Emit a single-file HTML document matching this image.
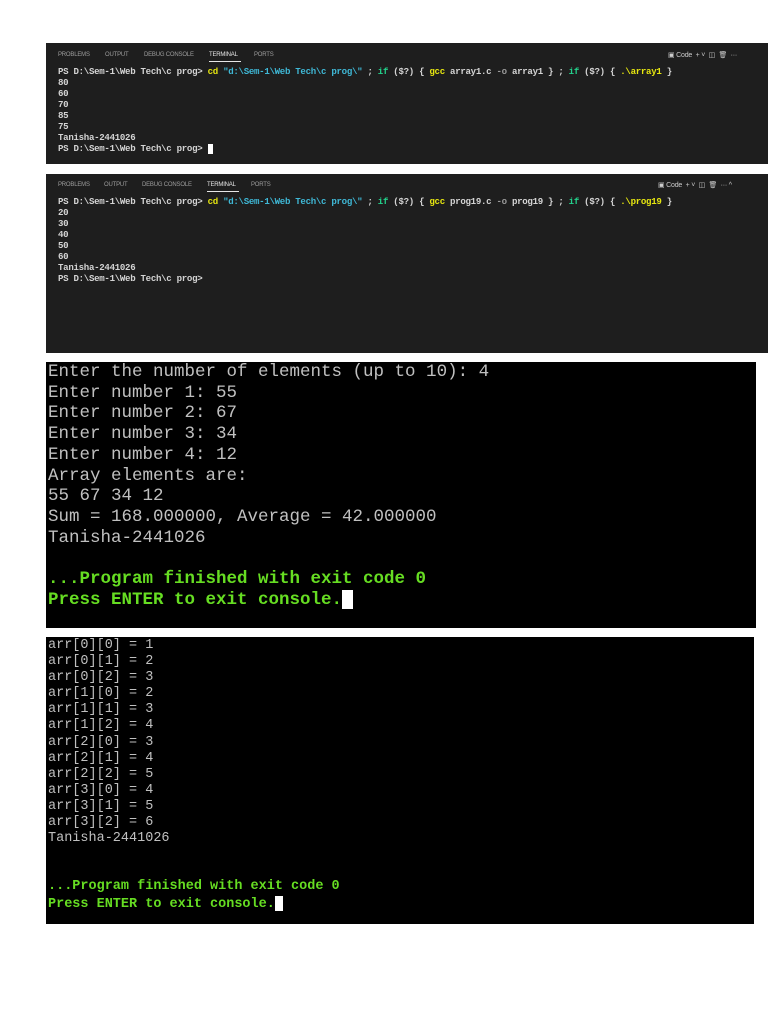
<!DOCTYPE html>
<html><head><meta charset="utf-8"><style>
body{margin:0;width:768px;height:1024px;background:#fff;position:relative;overflow:hidden}
.p{position:absolute;background:#1e1e1e}
.b{position:absolute;background:#000}
.t{position:absolute;font-family:"Liberation Sans",sans-serif;font-size:6px;color:#9d9d9d;letter-spacing:-0.2px}
.m{position:absolute;font-family:"Liberation Mono",monospace;font-size:9.1px;line-height:11px;color:#d4d4d4;white-space:pre;font-weight:bold;letter-spacing:-0.3px}
.y{color:#e5e510}.c{color:#3fb8d6}.g{color:#23d18b}
.k{position:absolute;font-family:"Liberation Mono",monospace;white-space:pre;color:#c0c0c0}
.gr{color:#66dd22;font-weight:bold}
.cur{display:inline-block;background:#fff;vertical-align:middle}
</style></head><body>
<div class="p" style="left:46px;top:43px;width:722px;height:121px"></div>
<div class="t" style="left:58px;top:52px">PROBLEMS</div>
<div class="t" style="left:105px;top:52px">OUTPUT</div>
<div class="t" style="left:144px;top:52px">DEBUG CONSOLE</div>
<div class="t" style="left:209px;top:52px;color:#e7e7e7">TERMINAL</div>
<div style="position:absolute;left:209px;top:61px;width:32px;height:1px;background:#e7e7e7"></div>
<div class="t" style="left:254px;top:52px">PORTS</div>
<div class="t" style="left:668px;top:51px;color:#ccc;font-size:7px">▣ Code &nbsp;+ ˅ &nbsp;◫ &nbsp;🗑 &nbsp;···</div>
<div class="m" style="left:58px;top:66px">PS D:\Sem-1\Web Tech\c prog> <span class="y">cd</span> <span class="c">"d:\Sem-1\Web Tech\c prog\"</span> ; <span class="g">if</span> ($?) { <span class="y">gcc</span> array1.c <span style="color:#999">-o</span> array1 } ; <span class="g">if</span> ($?) { <span class="y">.\array1</span> }
80
60
70
85
75
Tanisha-2441026
PS D:\Sem-1\Web Tech\c prog> <span class="cur" style="width:5px;height:10px"></span></div>

<div class="p" style="left:46px;top:174px;width:722px;height:179px"></div>
<div class="t" style="left:58px;top:182px">PROBLEMS</div>
<div class="t" style="left:104px;top:182px">OUTPUT</div>
<div class="t" style="left:142px;top:182px">DEBUG CONSOLE</div>
<div class="t" style="left:207px;top:182px;color:#e7e7e7">TERMINAL</div>
<div style="position:absolute;left:207px;top:191px;width:32px;height:1px;background:#e7e7e7"></div>
<div class="t" style="left:251px;top:182px">PORTS</div>
<div class="t" style="left:658px;top:181px;color:#ccc;font-size:7px">▣ Code &nbsp;+ ˅ &nbsp;◫ &nbsp;🗑 &nbsp;··· ^</div>
<div class="m" style="left:58px;top:196px">PS D:\Sem-1\Web Tech\c prog> <span class="y">cd</span> <span class="c">"d:\Sem-1\Web Tech\c prog\"</span> ; <span class="g">if</span> ($?) { <span class="y">gcc</span> prog19.c <span style="color:#999">-o</span> prog19 } ; <span class="g">if</span> ($?) { <span class="y">.\prog19</span> }
20
30
40
50
60
Tanisha-2441026
PS D:\Sem-1\Web Tech\c prog></div>

<div class="b" style="left:46px;top:362px;width:710px;height:266px"></div>
<div class="k" style="left:48px;top:362px;font-size:17.5px;line-height:20.7px">Enter the number of elements (up to 10): 4
Enter number 1: 55
Enter number 2: 67
Enter number 3: 34
Enter number 4: 12
Array elements are:
55 67 34 12
Sum = 168.000000, Average = 42.000000
Tanisha-2441026

<span class="gr">...Program finished with exit code 0
Press ENTER to exit console.</span><span class="cur" style="width:11px;height:19px"></span></div>

<div class="b" style="left:46px;top:637px;width:708px;height:287px"></div>
<div class="k" style="left:48px;top:638px;font-size:13.5px;line-height:16.1px">arr[0][0] = 1
arr[0][1] = 2
arr[0][2] = 3
arr[1][0] = 2
arr[1][1] = 3
arr[1][2] = 4
arr[2][0] = 3
arr[2][1] = 4
arr[2][2] = 5
arr[3][0] = 4
arr[3][1] = 5
arr[3][2] = 6
Tanisha-2441026


<span class="gr">...Program finished with exit code 0
Press ENTER to exit console.</span><span class="cur" style="width:8px;height:15px"></span></div>
</body></html>
